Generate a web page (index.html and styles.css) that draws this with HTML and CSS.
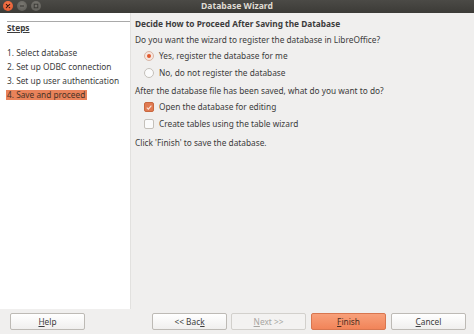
FILE: index.html
```html
<!DOCTYPE html>
<html>
<head>
<meta charset="utf-8">
<link rel="stylesheet" href="styles.css">
</head>
<body>
<div class="window">
  <div class="titlebar">
    <div class="controls">
      <span class="wbtn close"><svg width="10" height="10" viewBox="0 0 10 10"><path d="M3.3 3.3 L6.7 6.7 M6.7 3.3 L3.3 6.7" stroke="#3a1a10" stroke-width="1.1" stroke-linecap="round"/></svg></span>
      <span class="wbtn"><svg width="10" height="10" viewBox="0 0 10 10"><path d="M3 5 H7" stroke="#3b3a36" stroke-width="1.1"/></svg></span>
      <span class="wbtn"><svg width="10" height="10" viewBox="0 0 10 10"><rect x="3.2" y="3.2" width="3.6" height="3.6" fill="none" stroke="#3b3a36" stroke-width="1"/></svg></span>
    </div>
    <div class="title">Database Wizard</div>
  </div>
  <div class="main">
    <aside class="roadmap">
      <div class="rule"></div>
      <div class="steps-title">Steps</div>
      <ol class="steps">
        <li>1. Select database</li>
        <li>2. Set up ODBC connection</li>
        <li>3. Set up user authentication</li>
        <li><span class="current">4. Save and proceed</span></li>
      </ol>
    </aside>
    <section class="page">
      <div class="heading">Decide How to Proceed After Saving the Database</div>
      <div class="row q">Do you want the wizard to register the database in LibreOffice?</div>
      <div class="row opt"><span class="radio on"></span>Yes, register the database for me</div>
      <div class="row opt r2"><span class="radio"></span>No, do not register the database</div>
      <div class="row q gap1">After the database file has been saved, what do you want to do?</div>
      <div class="row opt"><span class="check on"><svg width="9" height="9" viewBox="0 0 9 9"><path d="M2 4.6 L3.8 6.4 L7.2 2.4" fill="none" stroke="#fbe3d8" stroke-width="1.3"/></svg></span>Open the database for editing</div>
      <div class="row opt r2"><span class="check"></span>Create tables using the table wizard</div>
      <div class="row q gap2">Click 'Finish' to save the database.</div>
    </section>
  </div>
  <div class="buttons">
    <button class="btn"><u>H</u>elp</button>
    <div class="nav">
      <button class="btn">&lt;&lt; Bac<u>k</u></button>
      <button class="btn disabled"><u>N</u>ext &gt;&gt;</button>
      <button class="btn primary"><u>F</u>inish</button>
      <button class="btn"><u>C</u>ancel</button>
    </div>
  </div>
</div>
</body>
</html>
```
FILE: styles.css
```css
* { box-sizing: border-box; }
html, body { margin: 0; padding: 0; }
body {
  width: 474px;
  height: 334px;
  overflow: hidden;
  font-family: "Noto Sans", "Open Sans", sans-serif;
  font-size: 8.3px;
  color: #3c3c3c;
  background: #f0efee;
}
.window { width: 474px; height: 334px; display: flex; flex-direction: column; }
.titlebar {
  height: 13px;
  background: linear-gradient(#4b4a46, #3c3b37);
  position: relative;
  display: flex;
  align-items: center;
  justify-content: center;
}
.controls {
  position: absolute;
  left: 3px;
  top: 1px;
  display: flex;
  gap: 4px;
}
.wbtn {
  width: 10px;
  height: 10px;
  border-radius: 50%;
  background: radial-gradient(circle at 50% 35%, #7a7872, #5a5954);
  display: block;
}
.wbtn svg { display: block; }
.wbtn.close { background: radial-gradient(circle at 50% 35%, #f47a4e, #e2532a); }
.title {
  color: #dfdbd2;
  font-weight: bold;
  font-size: 8.6px;
  line-height: 13px;
}
.main { height: 296px; display: flex; }
.roadmap {
  width: 130px;
  background: #ffffff;
  padding-top: 8px;
}
.rule { height: 1px; background: #a9a9a9; margin-left: 7px; }
.steps-title {
  margin-left: 7px;
  font-weight: bold;
  text-decoration: underline;
  line-height: 12px;
}
.steps {
  list-style: none;
  margin: 12px 0 0 0;
  padding: 0 0 0 7px;
}
.steps li { line-height: 14px; height: 14px; white-space: nowrap; }
.current {
  display: inline-block;
  background: #e9825a;
  color: #4a3326;
  line-height: 10px;
  margin-left: -1px;
  padding: 0 2px 0 1px;
}
.page { flex: 1; padding: 2px 0 0 4px; border-left: 1px solid #e2e1df; }
.heading { font-weight: bold; line-height: 17px; }
.row { line-height: 16px; white-space: nowrap; display: flex; align-items: center; }
.row.q { height: 16px; }
.row.opt { height: 16px; padding-left: 9px; }
.row.opt.r2 { height: 17px; }
.gap1 { margin-top: 1px; height: 17px !important; }
.gap2 { margin-top: 2px; height: 17px !important; }
.radio {
  width: 10px;
  height: 10px;
  border-radius: 50%;
  border: 1px solid #c4c0ba;
  background: #fbfbfb;
  margin-right: 5px;
  display: flex;
  align-items: center;
  justify-content: center;
}
.radio.on { border-color: #d8b5a5; background: #f6e6df; }
.radio.on::after {
  content: "";
  width: 4px;
  height: 4px;
  border-radius: 50%;
  background: #e0592e;
}
.check {
  width: 10px;
  height: 10px;
  border-radius: 2px;
  border: 1px solid #c4c0ba;
  background: #fbfbfb;
  margin-right: 5px;
  display: flex;
  align-items: center;
  justify-content: center;
}
.check.on { background: #e07a52; border-color: #c8683f; }
.check svg { display: block; }
.buttons {
  flex: 1;
  display: flex;
  align-items: flex-start;
  padding: 4px 8px 0 10px;
}
.nav { margin-left: auto; display: flex; gap: 4px; }
.nav .btn + .btn + .btn { margin-left: 1px; }
.btn {
  width: 75px;
  height: 17px;
  padding: 0;
  font-family: inherit;
  font-size: 8.3px;
  color: #3c3c3c;
  border: 1px solid #bdbab5;
  border-radius: 2px;
  background: linear-gradient(#ffffff, #f0efee);
}
.btn.disabled { color: #a8a6a2; background: #f3f2f1; border-color: #d2d0cc; }
.btn.primary {
  background: linear-gradient(#f8a07a, #f18459);
  border-color: #d8764f;
  color: #4a2e22;
}
```
